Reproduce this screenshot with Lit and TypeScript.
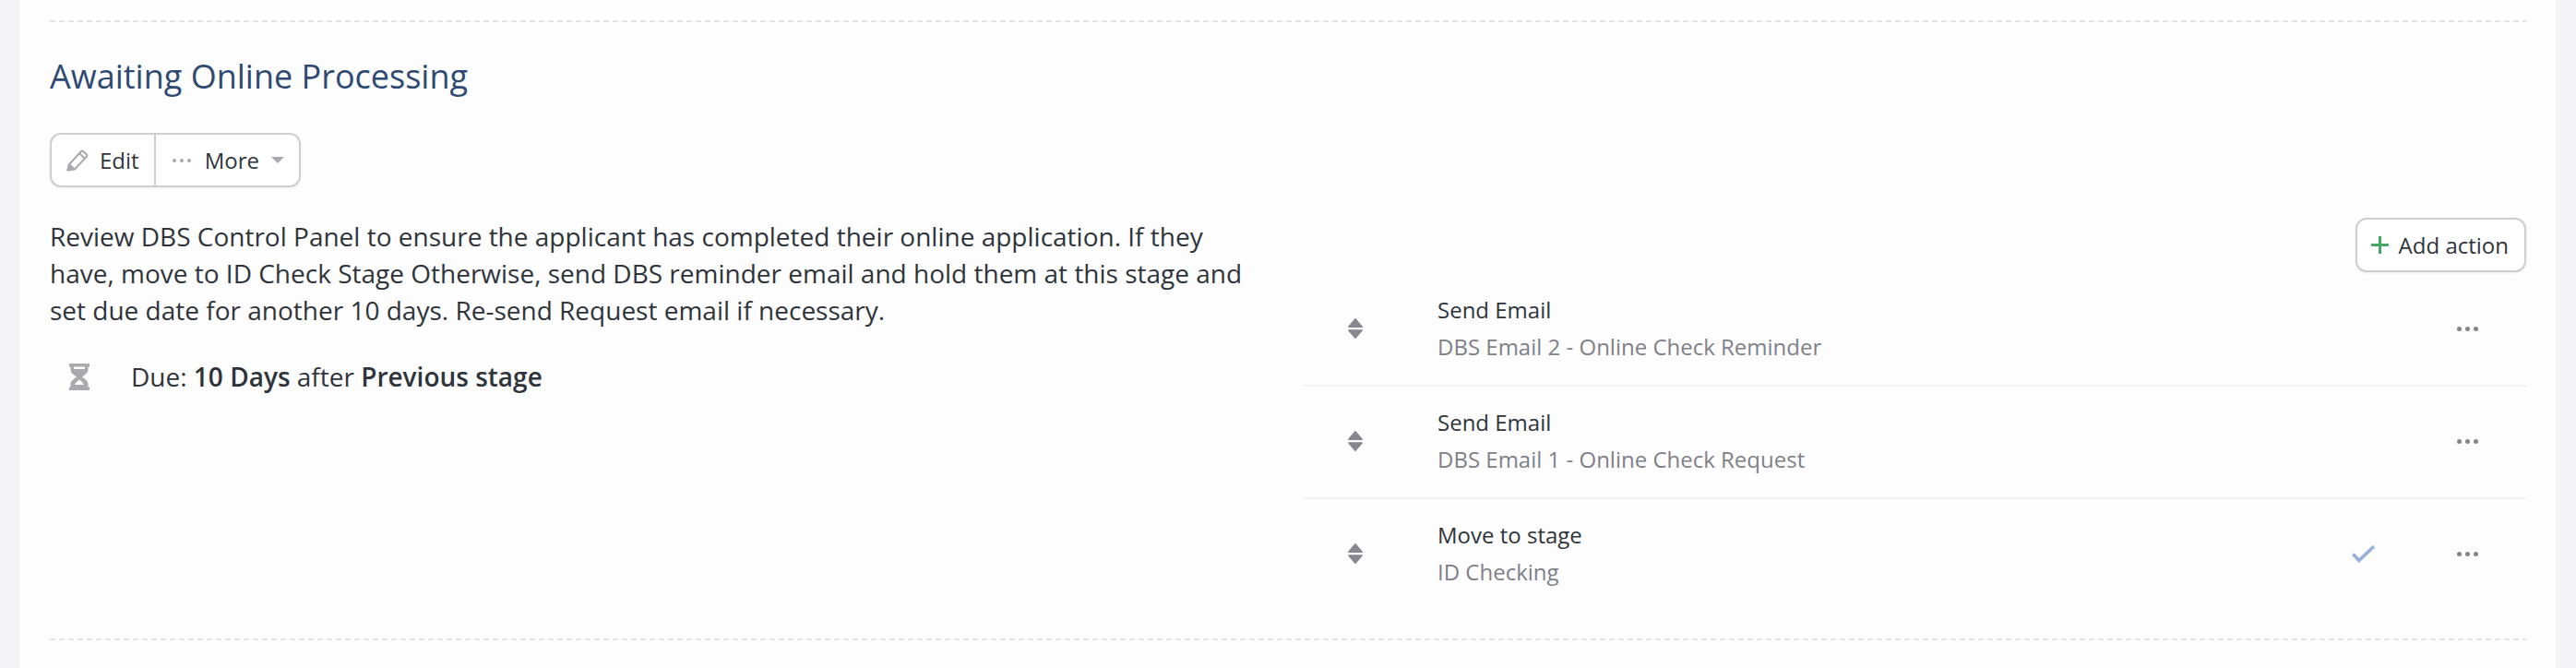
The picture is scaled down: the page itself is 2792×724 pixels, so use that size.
import { css, html, LitElement, svg } from "lit";
import { customElement } from "lit/decorators.js";

interface ActionItem {
  title: string;
  detail: string;
  done?: boolean;
}

const ACTIONS: ActionItem[] = [
  { title: "Send Email", detail: "DBS Email 2 - Online Check Reminder" },
  { title: "Send Email", detail: "DBS Email 1 - Online Check Request" },
  { title: "Move to stage", detail: "ID Checking", done: true },
];

const pencilIcon = svg`<svg width="24" height="24" viewBox="0 0 24 24" fill="none" stroke="#a9a9ae" stroke-width="2" stroke-linejoin="round">
  <path d="M1.500 22.500l1.400-6.300L15.800 2.300a1.800 1.800 0 0 1 2.500-.1l3.400 3.100a1.800 1.800 0 0 1 .1 2.500L8.900 21.600z"/>
  <path d="M2.900 16.200l6 5.400M14 4.300l6 5.400"/>
  <path d="M1.500 22.500l1-4.500 3.500 3.200z" fill="#a9a9ae"/>
</svg>`;

const hourglassIcon = svg`<svg width="22" height="29" viewBox="0 0 22 29" fill="#a9a9ae">
  <path fill-rule="evenodd" d="M0 0h22v3.500h-1.500v3.500c0 3-4 5.500-6.500 7.500 2.500 2 6.500 4.500 6.500 7.500v3.500H22V29H0v-3.500h1.500V22c0-3 4-5.500 6.500-7.500C5.500 12.500 1.500 10 1.500 7V3.500H0zM5 3.500h12v2.500H5zM11 17.500C9.300 19.200 6.800 20.800 5.800 23h10.400c-1-2.200-3.500-3.800-5.200-5.500z"/>
</svg>`;

const sortIcon = svg`<svg width="16" height="22" viewBox="0 0 16 22" fill="#87878f" stroke="#87878f" stroke-width="1.500" stroke-linejoin="round">
  <path d="M8 .8l7.200 8.400H.8zM.8 13h14.400L8 21.200z"/>
</svg>`;

const checkIcon = svg`<svg width="25" height="19" viewBox="0 0 25 19" fill="none" stroke="#97b1dc" stroke-width="3.700">
  <path d="M1.300 9.500l6.500 7L24 1.200"/>
</svg>`;

const plusIcon = svg`<svg width="19" height="19" viewBox="0 0 19 19" stroke="#46a765" stroke-width="3">
  <path d="M9.500 0v19M0 9.500h19"/>
</svg>`;

@customElement("app-root")
export class AppRoot extends LitElement {
  static styles = css`
    :host {
      display: block;
      height: 724px;
      overflow: hidden;
      background: #f3f3f6;
      font-family: "Open Sans", sans-serif;
      color: #2f343b;
    }
    .card {
      box-sizing: border-box;
      height: 724px;
      margin: 0 22px 0 21px;
      padding: 22px 32px 0 33px;
      background: #fdfdfe;
    }
    .dashes {
      height: 2px;
      background: repeating-linear-gradient(to right, #e2e2e8 0 6px, transparent 6px 10px);
    }
    .dashes.end {
      margin-top: 31px;
    }
    h2 {
      margin: 0;
      padding-top: 33px;
      height: 90px;
      box-sizing: border-box;
      font-size: 36px;
      line-height: 52px;
      font-weight: 400;
      color: #2f4a72;
    }
    .btn-group {
      display: inline-flex;
      height: 59px;
      margin-top: 30px;
      box-sizing: border-box;
      border: 2px solid #cdcdd3;
      border-radius: 12px;
      background: #fff;
      box-shadow: 0 1px 3px rgba(0, 0, 0, 0.06);
      font-size: 24px;
    }
    .btn {
      display: flex;
      align-items: center;
    }
    .btn + .btn {
      border-left: 2px solid #cdcdd3;
    }
    .edit {
      padding: 0 16px;
      gap: 12px;
    }
    .more {
      padding: 0 16px 0 18px;
    }
    .dots {
      display: flex;
      gap: 4px;
    }
    .dots i {
      width: 4px;
      height: 4px;
      border-radius: 50%;
      background: #a9a9ae;
    }
    .more .dots {
      margin-right: 15px;
    }
    .caret {
      width: 0;
      height: 0;
      margin-left: 13px;
      border: 7px solid transparent;
      border-top: 7px solid #a9a9ae;
      border-bottom: 0;
    }
    .columns {
      display: grid;
      grid-template-columns: 1358px 1326px;
      margin-top: 33px;
    }
    .description {
      margin: 0;
      width: 1310px;
      font-size: 28px;
      line-height: 40px;
    }
    .due {
      display: flex;
      align-items: center;
      margin-top: 32px;
      font-size: 28px;
      line-height: 40px;
    }
    .due-icon {
      display: flex;
      width: 88px;
      padding-left: 21px;
      box-sizing: border-box;
    }
    .due b {
      font-weight: 600;
    }
    .actions {
      display: flex;
      flex-direction: column;
      align-items: stretch;
    }
    .add {
      display: flex;
      align-items: center;
      align-self: flex-end;
      gap: 11px;
      box-sizing: border-box;
      height: 59px;
      padding: 0 17px 0 15px;
      border: 2px solid #cdcdd3;
      border-radius: 12px;
      background: #fff;
      box-shadow: 0 1px 3px rgba(0, 0, 0, 0.06);
      font-size: 24px;
    }
    .row {
      display: flex;
      align-items: center;
      box-sizing: border-box;
      height: 122px;
    }
    .row + .row {
      box-shadow: inset 0 2px 0 #f3f3f6;
    }
    .grip {
      display: flex;
      width: 146px;
      padding-left: 49px;
      box-sizing: border-box;
    }
    .text {
      flex: 1;
      font-size: 24px;
      line-height: 40px;
    }
    .title {
      color: #2f343b;
    }
    .detail {
      color: #808088;
    }
    .status {
      display: flex;
      width: 25px;
      margin-right: 89px;
    }
    .row .dots {
      margin-right: 52px;
    }
    .row .dots i {
      width: 5px;
      height: 5px;
      background: #84848c;
    }
  `;

  renderDots() {
    return html`<span class="dots"><i></i><i></i><i></i></span>`;
  }

  renderAction(action: ActionItem) {
    return html`
      <div class="row">
        <span class="grip">${sortIcon}</span>
        <div class="text">
          <div class="title">${action.title}</div>
          <div class="detail">${action.detail}</div>
        </div>
        <span class="status">${action.done ? checkIcon : ""}</span>
        ${this.renderDots()}
      </div>
    `;
  }

  render() {
    return html`
      <div class="card">
        <div class="dashes"></div>
        <h2>Awaiting Online Processing</h2>
        <div class="btn-group">
          <div class="btn edit">${pencilIcon}<span>Edit</span></div>
          <div class="btn more">
            ${this.renderDots()}<span>More</span><span class="caret"></span>
          </div>
        </div>
        <div class="columns">
          <div>
            <p class="description">
              Review DBS Control Panel to ensure the applicant has completed their online
              application. If they have, move to ID Check Stage Otherwise, send DBS reminder email
              and hold them at this stage and set due date for another 10 days. Re-send Request
              email if necessary.
            </p>
            <div class="due">
              <span class="due-icon">${hourglassIcon}</span>
              <span>Due: <b>10 Days</b> after <b>Previous stage</b></span>
            </div>
          </div>
          <div class="actions">
            <div class="add">${plusIcon}<span>Add action</span></div>
            ${ACTIONS.map((action) => this.renderAction(action))}
          </div>
        </div>
        <div class="dashes end"></div>
      </div>
    `;
  }
}
